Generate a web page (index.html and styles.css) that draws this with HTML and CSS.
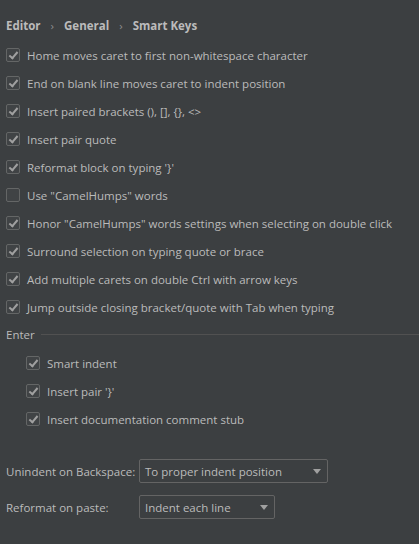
FILE: index.html
```html
<!DOCTYPE html>
<html lang="en">
<head>
    <meta charset="UTF-8">
    <title>Smart Keys</title>
    <link rel="stylesheet" href="styles.css">
</head>
<body>
    <!-- Breadcrumb -->
    <div class="crumbs">
        <span>Editor</span><span class="sep">›</span><span>General</span><span class="sep">›</span><span>Smart Keys</span>
    </div>

    <div class="options">
        <label class="row"><span class="box checked"></span>Home moves caret to first non-whitespace character</label>
        <label class="row"><span class="box checked"></span>End on blank line moves caret to indent position</label>
        <label class="row"><span class="box checked"></span>Insert paired brackets (), [], {}, &lt;&gt;</label>
        <label class="row"><span class="box checked"></span>Insert pair quote</label>
        <label class="row"><span class="box checked"></span>Reformat block on typing '}'</label>
        <label class="row"><span class="box"></span>Use "CamelHumps" words</label>
        <label class="row"><span class="box checked"></span>Honor "CamelHumps" words settings when selecting on double click</label>
        <label class="row"><span class="box checked"></span>Surround selection on typing quote or brace</label>
        <label class="row"><span class="box checked"></span>Add multiple carets on double Ctrl with arrow keys</label>
        <label class="row"><span class="box checked"></span>Jump outside closing bracket/quote with Tab when typing</label>
    </div>

    <!-- Enter group -->
    <div class="group-title"><span>Enter</span><div class="line"></div></div>
    <div class="options indent">
        <label class="row"><span class="box checked"></span>Smart indent</label>
        <label class="row"><span class="box checked"></span>Insert pair '}'</label>
        <label class="row"><span class="box checked"></span>Insert documentation comment stub</label>
    </div>

    <div class="fields">
        <div class="field">
            <span class="field-label">Unindent on Backspace:</span>
            <div class="combo wide"><span>To proper indent position</span><span class="arrow"></span></div>
        </div>
        <div class="field">
            <span class="field-label">Reformat on paste:</span>
            <div class="combo narrow"><span>Indent each line</span><span class="arrow"></span></div>
        </div>
    </div>
</body>
</html>
```

FILE: styles.css
```css
/* Basic Styles */
html, body {
    height: 100%;
}

body {
    margin: 0;
    background: #3c3f41;
    color: #bbbbbb;
    font-family: "Open Sans", "Noto Sans", sans-serif;
    font-size: 11.5px;
    overflow: hidden;
}

/* Breadcrumb */
.crumbs {
    display: flex;
    align-items: center;
    height: 20px;
    padding: 15px 0 0 6px;
    font-weight: bold;
    font-size: 11.5px;
}

.crumbs .sep {
    font-weight: normal;
    margin: 0 10px;
    color: #8c8c8c;
}

/* Checkbox rows */
.options {
    display: flex;
    flex-direction: column;
    padding: 6px 0 0 6px;
}

.options.indent {
    padding: 7px 0 0 26px;
}

.row {
    display: flex;
    align-items: center;
    height: 28px;
    gap: 7px;
    white-space: nowrap;
}

.box {
    width: 12px;
    height: 12px;
    border: 1px solid #646666;
    border-radius: 2px;
    background: #404345;
    position: relative;
    flex: none;
}

.box.checked::after {
    content: "";
    position: absolute;
    left: 4px;
    top: 1px;
    width: 3px;
    height: 7px;
    border: solid #a0a0a0;
    border-width: 0 2px 2px 0;
    transform: rotate(40deg);
}

/* Group title with separator */
.group-title {
    display: flex;
    align-items: center;
    gap: 6px;
    padding: 5px 0 0 6px;
    height: 16px;
}

.group-title .line {
    flex: 1;
    height: 1px;
    background: #515151;
}

/* Combo fields */
.fields {
    padding: 26px 0 0 6px;
    display: flex;
    flex-direction: column;
    gap: 12px;
}

.field {
    display: flex;
    align-items: center;
}

.field-label {
    width: 133px;
    white-space: nowrap;
}

.combo {
    display: flex;
    align-items: center;
    justify-content: space-between;
    height: 22px;
    padding: 0 6px 0 5px;
    border: 1px solid #646464;
    border-radius: 2px;
    background: #3c3f41;
}

.combo.wide {
    width: 176px;
}

.combo.narrow {
    width: 123px;
}

.arrow {
    width: 0;
    height: 0;
    border-left: 4px solid transparent;
    border-right: 4px solid transparent;
    border-top: 5px solid #a0a0a0;
}
```
